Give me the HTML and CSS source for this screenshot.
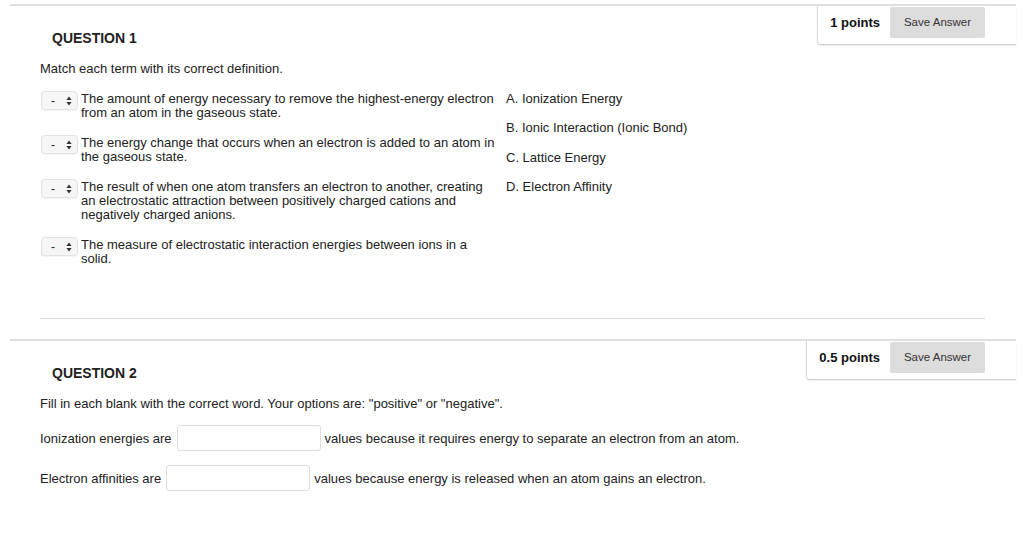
FILE: index.html
```html
<!DOCTYPE html>
<html lang="en">
<head>
  <meta charset="UTF-8" />
  <meta name="viewport" content="width=device-width, initial-scale=1.0"/>
  <title>Quiz</title>
  <link rel="stylesheet" href="styles.css">
</head>
<body>

  <!-- Question 1 -->
  <div class="question">
    <div class="points-box">
      <span class="points">1 points</span>
      <button class="save-btn">Save Answer</button>
    </div>
    <h3 class="question-title">QUESTION 1</h3>
    <div class="question-body">
      <p class="prompt">Match each term with its correct definition.</p>

      <div class="matching">
        <div class="match-col">
          <div class="match-row">
            <span class="select-box">- <svg class="arrows" width="6" height="10" viewBox="0 0 6 10"><path d="M3 0.5 L5.6 4 L0.4 4 Z M3 9.5 L5.6 6 L0.4 6 Z" fill="#333"/></svg></span>
            <span class="match-text">The amount of energy necessary to remove the highest-energy electron from an atom in the gaseous state.</span>
          </div>
          <div class="match-row">
            <span class="select-box">- <svg class="arrows" width="6" height="10" viewBox="0 0 6 10"><path d="M3 0.5 L5.6 4 L0.4 4 Z M3 9.5 L5.6 6 L0.4 6 Z" fill="#333"/></svg></span>
            <span class="match-text">The energy change that occurs when an electron is added to an atom in the gaseous state.</span>
          </div>
          <div class="match-row">
            <span class="select-box">- <svg class="arrows" width="6" height="10" viewBox="0 0 6 10"><path d="M3 0.5 L5.6 4 L0.4 4 Z M3 9.5 L5.6 6 L0.4 6 Z" fill="#333"/></svg></span>
            <span class="match-text">The result of when one atom transfers an electron to another, creating an electrostatic attraction between positively charged cations and negatively charged anions.</span>
          </div>
          <div class="match-row">
            <span class="select-box">- <svg class="arrows" width="6" height="10" viewBox="0 0 6 10"><path d="M3 0.5 L5.6 4 L0.4 4 Z M3 9.5 L5.6 6 L0.4 6 Z" fill="#333"/></svg></span>
            <span class="match-text">The measure of electrostatic interaction energies between ions in a solid.</span>
          </div>
        </div>

        <ul class="answer-list">
          <li>A. Ionization Energy</li>
          <li>B. Ionic Interaction (Ionic Bond)</li>
          <li>C. Lattice Energy</li>
          <li>D. Electron Affinity</li>
        </ul>
      </div>
    </div>
    <div class="divider"></div>
  </div>

  <!-- Question 2 -->
  <div class="question">
    <div class="points-box">
      <span class="points">0.5 points</span>
      <button class="save-btn">Save Answer</button>
    </div>
    <h3 class="question-title">QUESTION 2</h3>
    <div class="question-body">
      <p class="prompt">Fill in each blank with the correct word. Your options are: "positive" or "negative".</p>

      <div class="blank-row">
        <span>Ionization energies are</span>
        <input type="text" class="blank">
        <span>values because it requires energy to separate an electron from an atom.</span>
      </div>
      <div class="blank-row">
        <span>Electron affinities are</span>
        <input type="text" class="blank">
        <span>values because energy is released when an atom gains an electron.</span>
      </div>
    </div>
  </div>

</body>
</html>
```

FILE: styles.css
```css
body {
  margin: 0;
  font-family: "Liberation Sans", Arial, sans-serif;
  font-size: 13px;
  color: #222;
  background-color: #fff;
}

.question {
  margin: 4px 8px 0 10px;
  border-top: 2px solid #e0e0e0;
}

.question + .question {
  margin-top: 20px;
}

.points-box {
  float: right;
  display: flex;
  align-items: center;
  gap: 10px;
  padding: 1px 31px 6px 12px;
  border-left: 1px solid #dadada;
  border-bottom: 1px solid #cfcfcf;
  border-bottom-left-radius: 4px;
  box-shadow: 0 1px 2px rgba(0, 0, 0, 0.08);
}

.points {
  font-weight: bold;
  font-size: 13px;
  color: #111;
}

.save-btn {
  width: 95px;
  height: 31px;
  padding: 0 0 2px;
  border: none;
  border-radius: 2px;
  background-color: #dcdcdc;
  font-family: "Liberation Sans", Arial, sans-serif;
  font-size: 11.5px;
  color: #333;
}

.question-title {
  margin: 0;
  padding: 24px 0 0 42px;
  font-size: 14px;
  line-height: 16px;
  font-weight: bold;
  color: #222;
}

.question-body {
  padding: 16px 0 0 30px;
}

.prompt {
  margin: 0;
  line-height: 14px;
}

.matching {
  display: flex;
  gap: 7px;
  margin-top: 16px;
}

.match-row {
  display: flex;
  align-items: flex-start;
  gap: 3px;
  margin-bottom: 16px;
  line-height: 14px;
}

.select-box {
  display: flex;
  align-items: center;
  justify-content: space-between;
  box-sizing: border-box;
  width: 37px;
  height: 19px;
  margin: -1px 0 0 1px;
  padding: 0 5px 0 9px;
  border: 1px solid #e2e2e2;
  border-radius: 4px;
  background-color: #f6f6f6;
  box-shadow: 0 1px 0 rgba(0, 0, 0, 0.04);
  font-size: 12px;
}

.match-text {
  width: 418px;
}

.answer-list {
  list-style: none;
  margin: 0;
  padding: 0;
}

.answer-list li {
  line-height: 14px;
  margin-bottom: 15.3px;
}

.divider {
  margin: 36px 31px 0 30px;
  border-top: 1px solid #dcdcdc;
}

.blank-row {
  display: flex;
  align-items: center;
  gap: 4px;
  margin-top: 14px;
}

.blank {
  box-sizing: border-box;
  width: 144px;
  height: 26px;
  margin: 0 0 0 1px;
  border: 1px solid #dedede;
  border-radius: 3px;
  background-color: #fff;
}
```
